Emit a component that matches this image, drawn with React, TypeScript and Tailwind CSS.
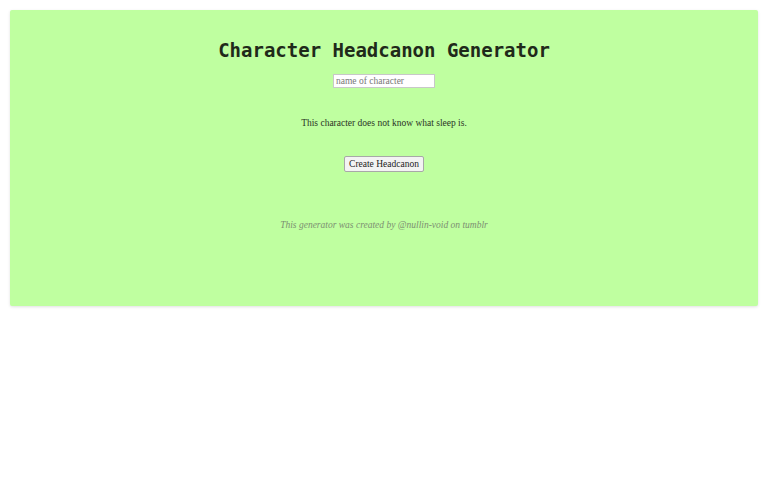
import React, { useState } from 'react';

const headcanons = [
  'This character does not know what sleep is.',
];

export default function App() {
  const [name, setName] = useState('');
  const [text, setText] = useState(headcanons[0]);

  return (
    <div className="min-h-screen bg-white p-[10px]">
      <div className="bg-[#bfffa0] rounded-[2px] shadow-[0_1px_3px_rgba(0,0,0,0.12)] h-[296px] flex flex-col items-center pt-[28px]">
        <h1 className="font-['DejaVu_Sans_Mono',monospace] font-bold text-[19px] leading-[24px] text-[#1f2a1a]">
          Character Headcanon Generator
        </h1>
        <input
          value={name}
          onChange={(e) => setName(e.target.value)}
          placeholder="name of character"
          className="mt-[12px] w-[102px] h-[14px] bg-white border border-[#c8c8c8] px-[2px] font-['Liberation_Serif',serif] text-[9.5px] leading-[12px] text-[#333] placeholder:text-[#777] outline-none"
        />
        <p className="mt-[29px] font-['Liberation_Serif',serif] text-[9.5px] leading-[12px] text-[#2a3325]">
          {text}
        </p>
        <button
          onClick={() => setText(headcanons[Math.floor(Math.random() * headcanons.length)])}
          className="mt-[27px] h-[16px] px-[4px] bg-[#f3f3f3] border border-[#a8a8a8] rounded-[2px] font-['Liberation_Serif',serif] text-[9.5px] leading-[12px] text-[#222]"
        >
          Create Headcanon
        </button>
        <p className="mt-[47px] font-['Liberation_Serif',serif] italic text-[9.5px] leading-[12px] text-[#7d8f72]">
          This generator was created by @nullin-void on tumblr
        </p>
      </div>
    </div>
  );
}
